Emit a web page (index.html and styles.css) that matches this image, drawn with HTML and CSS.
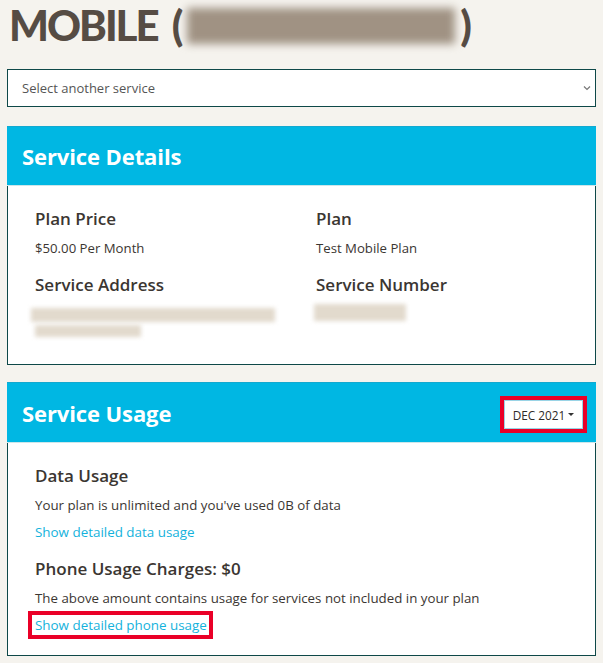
FILE: index.html
```html
<!DOCTYPE html>
<html>
<head>
<meta charset="utf-8">
<link rel="stylesheet" href="styles.css">
</head>
<body>
<h1 class="page-title"><span class="word">MOBILE</span><span class="open">(</span><span class="blur-num"></span><span class="close">)</span></h1>
<div class="select-box">
  <span>Select another service</span>
  <svg class="chev" width="8" height="6" viewBox="0 0 8 6"><path d="M1 1.5 L4 4.5 L7 1.5" fill="none" stroke="#777" stroke-width="1.2"/></svg>
</div>
<section class="panel details">
  <div class="panel-head"><h2>Service Details</h2></div>
  <div class="panel-body grid">
    <div class="cell">
      <h3>Plan Price</h3>
      <p class="val">$50.00 Per Month</p>
    </div>
    <div class="cell">
      <h3>Plan</h3>
      <p class="val">Test Mobile Plan</p>
    </div>
    <div class="cell">
      <h3 class="gap">Service Address</h3>
      <div class="blur blur-a1"></div>
      <div class="blur blur-a2"></div>
    </div>
    <div class="cell">
      <h3 class="gap">Service Number</h3>
      <div class="blur blur-n"></div>
    </div>
  </div>
</section>
<section class="panel usage">
  <div class="panel-head">
    <h2>Service Usage</h2>
    <button class="month">DEC 2021 <span class="caret"></span></button>
  </div>
  <div class="panel-body">
    <h3>Data Usage</h3>
    <p class="txt">Your plan is unlimited and you've used 0B of data</p>
    <p class="lnk"><a href="#">Show detailed data usage</a></p>
    <h3 class="gap">Phone Usage Charges: $0</h3>
    <p class="txt">The above amount contains usage for services not included in your plan</p>
    <p class="lnk"><a href="#" class="hl">Show detailed phone usage</a></p>
  </div>
</section>
</body>
</html>
```
FILE: styles.css
```css
html, body { margin: 0; padding: 0; }
body {
  background: #f5f3ee;
  padding: 0 7px;
  font-family: "Open Sans", "Liberation Sans", sans-serif;
  color: #3b3632;
}
.page-title {
  margin: 0;
  height: 52px;
  display: flex;
  align-items: flex-start;
  padding-left: 2px;
  font-family: Lato, "Liberation Sans", sans-serif;
  font-weight: 900;
  font-size: 42px;
  line-height: 50px;
  color: #564c44;
}
.word { letter-spacing: -2px; }
.open { margin-left: 14px; }
.blur-num {
  width: 268px;
  height: 36px;
  margin-top: 8px;
  margin-left: 4px;
  background: #a09283;
  filter: blur(4px);
}
.close { margin-left: 5px; }
.select-box {
  margin-top: 17px;
  height: 36px;
  border: 1px solid #0e4848;
  background: #fff;
  display: flex;
  align-items: center;
  justify-content: space-between;
  padding: 0 4px 0 14px;
  font-size: 13px;
  color: #555;
}
.panel {
  border: 1px solid #0e4848;
  background: #fff;
}
.details { margin-top: 19px; height: 237px; }
.usage { margin-top: 17px; height: 272px; }
.panel-head {
  margin: -1px -1px 0;
  background: #00b7e3;
  border-top: 1px solid #12a9d0;
  border-bottom: 1px solid #cde6ea;
  display: flex;
  align-items: center;
  justify-content: space-between;
  padding: 0 13px 0 15px;
}
.details .panel-head { height: 58px; }
.usage .panel-head { height: 59px; }
.panel-head h2 {
  margin: 0;
  color: #fff;
  font-family: "Open Sans", sans-serif;
  font-weight: 700;
  font-size: 22px;
  letter-spacing: -0.1px;
}
.panel-body { padding: 23px 27px 0; }
.grid {
  display: grid;
  grid-template-columns: 281px 1fr;
}
h3 {
  margin: 0;
  font-size: 17px;
  line-height: 20px;
  font-weight: 600;
  color: #3b3632;
}
h3.gap { margin-top: 18px; }
.val { margin: 10px 0 0; font-size: 13.2px; line-height: 18px; }
.blur { background: #e2dacd; filter: blur(2px); }
.blur-a1 { width: 244px; height: 14px; margin: 13px 0 0 -4px; }
.blur-a2 { width: 106px; height: 12px; margin: 3px 0 0 0; }
.blur-n { width: 92px; height: 17px; margin: 9px 0 0 -2px; }
.txt { margin: 10px 0 0; font-size: 13.3px; line-height: 18px; }
.lnk { margin: 9px 0 0; font-size: 13.4px; line-height: 18px; }
.lnk a { color: #14b2dc; text-decoration: none; }
.lnk a.hl {
  display: inline-block;
  outline: 4px solid #ea0027;
  outline-offset: 1px;
  padding: 0 1px 0 2px;
  margin-left: -2px;
}
.month {
  width: 79px;
  height: 29px;
  margin-top: 4px;
  background: #fff;
  border: 1px solid #9ad4e6;
  outline: 4px solid #ea0027;
  outline-offset: 0;
  font-family: "Open Sans", sans-serif;
  font-size: 11.8px;
  color: #2e2a27;
  padding: 0;
  display: flex;
  align-items: center;
  justify-content: center;
  gap: 3px;
}
.caret {
  width: 0; height: 0;
  border-left: 3px solid transparent;
  border-right: 3px solid transparent;
  border-top: 3px solid #333;
}
```
